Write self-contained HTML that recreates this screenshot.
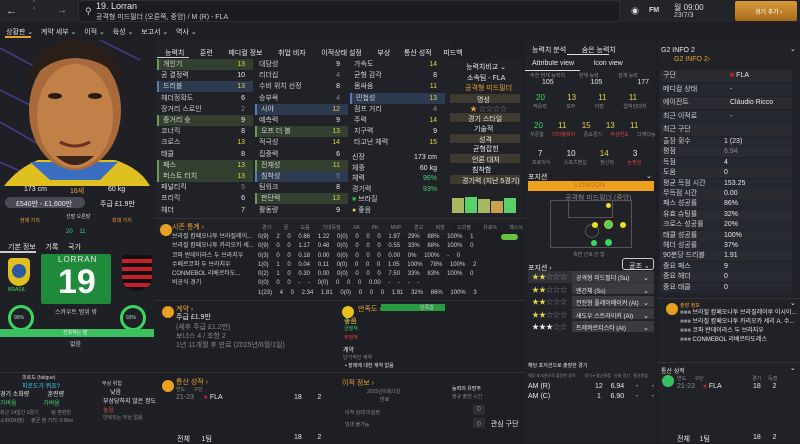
<!DOCTYPE html>
<html><head><meta charset="utf-8"><style>
*{margin:0;padding:0;box-sizing:border-box}
body{width:800px;height:443px;overflow:hidden;background:#1e1f24;font-family:"Liberation Sans","Noto Sans CJK KR",sans-serif;color:#d0d0d0;font-size:7px;position:relative}
.a{position:absolute;white-space:nowrap}
.p{position:absolute;background:#25262b}
.r{position:absolute;height:11px;line-height:11px;font-size:7px;color:#cfcfcf}
.g{background:#33402f;border-left:2px solid #6a9a5a}
.b{background:#2d3b50;border-left:2px solid #5a7ab0}
.y{color:#e3d24a}.w{color:#e8e8e8}.d{color:#888}
.or{color:#e8a030}.gr{color:#3fd36a}.rd{color:#e04545}
.ic{position:absolute;width:12px;height:12px;border-radius:50%;background:#e8a020}
</style></head><body>
<!-- top bar -->
<div class="p" style="left:0;top:0;width:800px;height:22px;background:#232429"></div>
<div class="a" style="left:6px;top:5px;font-size:11px;color:#ccc">&#8592;</div>
<div class="a" style="left:33px;top:1px;font-size:7px;color:#aaa">&#710;<br>&#711;</div>
<div class="a" style="left:57px;top:5px;font-size:10px;color:#aaa">&#8594;</div>
<div class="p" style="left:78px;top:0;width:542px;height:22px;background:#1b1c20;border:1px solid #2e2f35"></div>
<div class="a" style="left:85px;top:6px;font-size:9px;color:#ccc">&#9906;</div>
<div class="a" style="left:96px;top:1px;font-size:9px;color:#e8e8e8">19. Lorran</div>
<div class="a" style="left:96px;top:12px;font-size:7px;color:#ccc">공격형 미드필더 (오른쪽, 중앙) / M (R) - FLA</div>
<div class="a" style="left:631px;top:6px;font-size:8px;color:#ddd">&#9673;</div>
<div class="a" style="left:649px;top:7px;font-size:7px;color:#ddd;font-weight:bold">FM</div>
<div class="a" style="left:674px;top:2px;font-size:8px;color:#ddd">월 09:00</div>
<div class="a" style="left:674px;top:12px;font-size:7px;color:#ccc">23/7/3</div>
<div class="p" style="left:735px;top:1px;width:62px;height:20px;background:linear-gradient(#d99a3a,#a86a1c);border-radius:2px"></div>
<div class="a" style="left:755px;top:7px;font-size:6px;color:#fff">경기 추가 ›</div>
<!-- menu -->
<div class="a" style="left:6px;top:27px;font-size:7px;color:#ddd">상황판 ⌄ &nbsp;&nbsp; 계약 세부 ⌄ &nbsp;&nbsp; 이적 ⌄ &nbsp;&nbsp; 육성 ⌄ &nbsp;&nbsp; 보고서 ⌄ &nbsp;&nbsp; 역사 ⌄</div>
<div class="p" style="left:5px;top:36px;width:26px;height:2px;background:#e8a030"></div>
<!-- left player panel -->
<div class="p" style="left:0;top:40px;width:155px;height:403px;background:#1f2026"></div>
<svg class="a" style="left:0;top:40px" width="155" height="146">
<g stroke="#4a3c8a" stroke-width="1.5"><line x1="0" y1="8" x2="60" y2="40"/><line x1="0" y1="50" x2="40" y2="70"/><line x1="0" y1="82" x2="40" y2="105"/><line x1="0" y1="122" x2="40" y2="140"/><line x1="100" y1="0" x2="140" y2="20"/></g>
<path d="M4 146 Q18 128 38 120 L115 120 Q140 128 150 146 Z" fill="#e0c020"/>
<path d="M30 122 L50 140 L100 140 L118 122Z" fill="#3a6ec0"/>
<ellipse cx="75" cy="70" rx="46" ry="60" fill="#a86a3a"/>
<ellipse cx="75" cy="76" rx="38" ry="52" fill="#c08048"/>
<path d="M26 55 Q28 2 75 0 Q122 2 126 55 Q116 20 75 18 Q36 20 26 55Z" fill="#2a1e18"/>
<ellipse cx="55" cy="56" rx="7" ry="3" fill="#2a1a12"/><ellipse cx="95" cy="56" rx="7" ry="3" fill="#2a1a12"/>
<path d="M60 102 Q75 110 90 102" stroke="#6a3020" stroke-width="3" fill="none"/>
<path d="M56 116 Q75 134 94 116" fill="#3a2418"/>
</svg>
<div class="a w" style="left:24px;top:186px;font-size:7px">173 cm</div>
<div class="a or" style="left:70px;top:186px;font-size:7px">16세</div>
<div class="a w" style="left:108px;top:186px;font-size:7px">60 kg</div>
<div class="p" style="left:5px;top:197px;width:80px;height:11px;background:#4a4b52;border-radius:6px"></div>
<div class="a w" style="left:16px;top:199px">£540만 - £1,600만</div>
<div class="a w" style="left:100px;top:199px">주급 £1.9만</div>
<div class="a or" style="left:20px;top:217px;font-size:5px">현재 가치</div>
<div class="a or" style="left:112px;top:217px;font-size:5px">최대 가치</div>
<div class="a" style="left:66px;top:213px;font-size:5px">선발 오른발</div>
<div class="a gr" style="left:66px;top:229px;font-size:6px">20 &nbsp;&nbsp; 11</div>
<div class="a w" style="left:8px;top:242px">기본 정보 &nbsp;&nbsp;&nbsp; 기록 &nbsp;&nbsp;&nbsp; 국가</div>
<div class="p" style="left:0;top:251px;width:36px;height:2px;background:#ccc"></div>
<div class="a" style="left:8px;top:258px;width:22px;height:28px;border-radius:4px 4px 11px 11px;background:#e0c020"></div>
<div class="a" style="left:12px;top:264px;width:14px;height:14px;border-radius:50%;background:#2a5aa0"></div>
<div class="a gr" style="left:8px;top:287px;font-size:5px">BRASIL</div>
<div class="p" style="left:41px;top:254px;width:70px;height:50px;background:#1f8a3a;border-radius:2px"></div>
<div class="a w" style="left:58px;top:255px;font-size:8px;letter-spacing:1px">LORRAN</div>
<div class="a" style="left:58px;top:262px;font-size:34px;color:#fff;line-height:40px;font-weight:bold">19</div>
<div class="a" style="left:55px;top:307px;font-size:6px">스카우트 범위 밖</div>
<div class="a" style="left:122px;top:255px;width:30px;height:36px;background:repeating-linear-gradient(#111 0 4px,#c8202a 4px 8px);border-radius:3px 3px 14px 14px"></div>
<div class="a" style="left:8px;top:305px;width:26px;height:26px;border-radius:50%;border:3px solid #3ad860"></div>
<div class="a" style="left:14px;top:315px;font-size:5px">96%</div>
<div class="a" style="left:120px;top:305px;width:26px;height:26px;border-radius:50%;border:3px solid #3ad860"></div>
<div class="a" style="left:126px;top:315px;font-size:5px">93%</div>
<div class="p" style="left:0;top:329px;width:154px;height:8px;background:#3cc060"></div>
<div class="a" style="left:63px;top:329px;font-size:5px;color:#eee">선호하는 발</div>
<div class="a" style="left:70px;top:339px;font-size:6px">없음</div>
<div class="p" style="left:0;top:372px;width:154px;height:1px;background:#333"></div>
<div class="a" style="left:22px;top:374px;font-size:5px">피로도 (fatigue)</div>
<div class="a" style="left:22px;top:381px;font-size:6px;color:#3ac8e8">피로도가 뭐죠?</div>
<div class="a w" style="left:0;top:389px;font-size:6px">경기 소화량 &nbsp;&nbsp;&nbsp;&nbsp;&nbsp;&nbsp;&nbsp;&nbsp;&nbsp; 훈련량</div>
<div class="a gr" style="left:0;top:398px;font-size:6px">가벼움 &nbsp;&nbsp;&nbsp;&nbsp;&nbsp;&nbsp;&nbsp;&nbsp;&nbsp;&nbsp;&nbsp;&nbsp;&nbsp;&nbsp; 가벼움</div>
<div class="a d" style="left:0;top:409px;font-size:5px">최근 14일간 0경기 &nbsp;&nbsp;&nbsp;&nbsp;&nbsp;&nbsp;&nbsp; 팀 훈련만</div>
<div class="a d" style="left:0;top:417px;font-size:5px">소화(0/0분) &nbsp;&nbsp;&nbsp; 평균 뛴 거리: 0.0km</div>
<div class="a" style="left:102px;top:380px;font-size:5px">부상 위험</div>
<div class="a w" style="left:110px;top:387px;font-size:6px">낮음</div>
<div class="a w" style="left:103px;top:396px;font-size:6px">부상당하지 않은 정도</div>
<div class="a rd" style="left:103px;top:405px;font-size:6px">높음</div>
<div class="a d" style="left:103px;top:414px;font-size:5px">반복되는 부상 없음</div>
<!-- attribute table -->
<div class="p" style="left:155px;top:40px;width:295px;height:195px;background:#212228"></div>
<div class="a w" style="left:165px;top:48px">능력치 &nbsp;&nbsp;&nbsp;&nbsp;&nbsp;&nbsp; 훈련 &nbsp;&nbsp;&nbsp;&nbsp;&nbsp;&nbsp; 메디컬 정보 &nbsp;&nbsp;&nbsp;&nbsp;&nbsp;&nbsp; 취업 비자 &nbsp;&nbsp;&nbsp;&nbsp;&nbsp;&nbsp; 이적상태 설정 &nbsp;&nbsp;&nbsp;&nbsp;&nbsp;&nbsp; 부상 &nbsp;&nbsp;&nbsp;&nbsp;&nbsp; 통산 성적 &nbsp;&nbsp;&nbsp;&nbsp; 피드백</div>
<div class="p" style="left:157px;top:57px;width:32px;height:1px;background:#ccc"></div>
<div id="t"></div>
<!-- comparison col -->
<div class="p" style="left:448px;top:60px;width:74px;height:163px;background:#212228"></div>
<div class="a w" style="left:466px;top:62px">능력치비교 ⌄</div>
<div class="a w" style="left:467px;top:73px">소속팀 - FLA</div>
<div class="a or" style="left:465px;top:83px">공격형 미드필더</div>
<div class="p" style="left:450px;top:94px;width:70px;height:9px;background:#3e3a30"></div><div class="a w" style="left:477px;top:95px">명성</div>
<div class="a or" style="left:470px;top:104px">★ <span class="d">☆☆☆☆</span></div>
<div class="p" style="left:450px;top:113px;width:70px;height:9px;background:#3e3a30"></div><div class="a w" style="left:468px;top:114px">경기 스타일</div>
<div class="a w" style="left:474px;top:124px">기술적</div>
<div class="p" style="left:450px;top:134px;width:70px;height:9px;background:#3e3a30"></div><div class="a w" style="left:479px;top:135px">성격</div>
<div class="a w" style="left:473px;top:144px">균형잡힌</div>
<div class="p" style="left:450px;top:154px;width:70px;height:9px;background:#3e3a30"></div><div class="a w" style="left:472px;top:155px">언론 대처</div>
<div class="a w" style="left:472px;top:165px">침착함</div>
<div class="p" style="left:450px;top:175px;width:70px;height:9px;background:#3e3a30"></div><div class="a w" style="left:462px;top:176px">경기력 (지난 5경기)</div>
<div class="p" style="left:452px;top:198px;width:12px;height:15px;background:#a8b860"></div>
<div class="p" style="left:465px;top:197px;width:12px;height:16px;background:#5ad068"></div>
<div class="p" style="left:478px;top:199px;width:12px;height:14px;background:#a8b860"></div>
<div class="p" style="left:491px;top:201px;width:12px;height:12px;background:#c8a050"></div>
<div class="p" style="left:504px;top:198px;width:12px;height:15px;background:#5ad068"></div>
<!-- season stats -->
<div class="p" style="left:155px;top:218px;width:370px;height:1px;background:#333"></div>
<div class="ic" style="left:160px;top:224px"></div>
<div class="a or" style="left:172px;top:222px">시즌 통계 ›</div>
<div class="a d" style="left:262px;top:224px;font-size:5px;word-spacing:11px">경기 골 도움 기대득점 XA PK MVP 경고 퇴장 드리블 유효% 패스% 태클 관여 평균평점</div>
<div class="a" style="left:172px;top:233px;line-height:9.3px;font-size:6px">브라질 캄페오나투 브라질레이...<br>브라질 캄페오나투 카리오카 세...<br>코파 반데이라스 두 브라지우<br>수페르코파 두 브라지우<br>CONMEBOL 리베르타도...<br>비공식 경기<br>&nbsp;</div>
<div class="a" style="left:258px;top:233px;line-height:9.3px;font-size:6px;word-spacing:6px">0(9) 2 0 0.66 1.22 0(0) 0 0 0 1.97 29% 88% 100% 1<br>0(9) 0 0 1.17 0.48 0(0) 0 0 0 0.55 33% 88% 100% 0<br>0(3) 0 0 0.18 0.00 0(0) 0 0 0 0.00 0% 100% - 0<br>1(0) 1 0 0.04 0.11 0(0) 0 0 0 1.05 100% 78% 100% 2<br>0(2) 1 0 0.30 0.00 0(0) 0 0 0 7.50 33% 83% 100% 0<br>0(0) 0 0 - - 0(0) 0 0 0 0.00 - - - -<br>1(23) 4 0 2.34 1.81 0(0) 0 0 0 1.91 32% 86% 100% 3</div>
<div class="p" style="left:501px;top:234px;width:17px;height:6px;background:#6ac040;border-radius:3px"></div>
<div class="p" style="left:155px;top:300px;width:370px;height:1px;background:#333"></div>
<div class="ic" style="left:162px;top:306px"></div>
<div class="a or" style="left:176px;top:304px">계약 ›</div>
<div class="a w" style="left:176px;top:312px">주급 £1.9만</div>
<div class="a d" style="left:176px;top:322px">(세후 주급 £1.2만)</div>
<div class="a d" style="left:176px;top:331px">보너스 4 / 조항 2</div>
<div class="a d" style="left:176px;top:340px">1년 11개월 후 만료 (2025년/6월/1일)</div>
<div class="ic" style="left:342px;top:306px;background:#e8c020"></div>
<div class="a or" style="left:358px;top:304px">만족도 ›</div>
<div class="p" style="left:381px;top:304px;width:64px;height:7px;background:#2a9a40"></div>
<div class="a" style="left:420px;top:304px;font-size:5px">만족함</div>
<div class="a y" style="left:344px;top:316px">좋음</div>
<div class="a gr" style="left:344px;top:325px;font-size:5px">긍정적</div>
<div class="a rd" style="left:344px;top:334px;font-size:5px">부정적</div>
<div class="a w" style="left:343px;top:345px;font-size:6px">계약</div>
<div class="a d" style="left:343px;top:354px;font-size:5px">단기적인 계약</div>
<div class="a w" style="left:345px;top:362px;font-size:5px">• 장래에 대한 계약 없음</div>
<div class="p" style="left:155px;top:372px;width:370px;height:1px;background:#333"></div>
<div class="ic" style="left:162px;top:380px"></div>
<div class="a or" style="left:176px;top:377px">통산 성적 ›</div>
<div class="a d" style="left:176px;top:386px;font-size:5px">연도 &nbsp;&nbsp;&nbsp;&nbsp; 구단</div>
<div class="a d" style="left:176px;top:394px">21-23 &nbsp;&nbsp;&nbsp; <span style="color:#c22">●</span> <span class="w">FLA</span></div>
<div class="a w" style="left:294px;top:394px">18 &nbsp;&nbsp;&nbsp;&nbsp;&nbsp;&nbsp; 2</div>
<div class="a w" style="left:177px;top:434px">전체 &nbsp;&nbsp;&nbsp;&nbsp; 1팀</div>
<div class="a w" style="left:294px;top:434px">18 &nbsp;&nbsp;&nbsp;&nbsp;&nbsp;&nbsp; 2</div>
<div class="a or" style="left:342px;top:378px">이적 정보 ›</div>
<div class="a d" style="left:367px;top:388px;font-size:5px">2025년/6월/1일</div>
<div class="a d" style="left:380px;top:396px;font-size:5px">만료</div>
<div class="a w" style="left:452px;top:385px;font-size:5px">능력의 유망주</div>
<div class="a d" style="left:452px;top:393px;font-size:5px">정규 출전 시간</div>
<div class="a d" style="left:345px;top:409px;font-size:5px">이적 상태 미설정</div>
<div class="a d" style="left:345px;top:421px;font-size:5px">임대 불가능</div>
<div class="p" style="left:473px;top:405px;width:12px;height:10px;background:#2e2f35"></div><div class="a d" style="left:477px;top:406px">0</div>
<div class="p" style="left:473px;top:418px;width:12px;height:10px;background:#2e2f35"></div><div class="a d" style="left:477px;top:419px">0 <span class="w" style="margin-left:8px">관심 구단</span></div>
<!-- attribute analysis col -->
<div class="p" style="left:525px;top:40px;width:130px;height:403px;background:#212228"></div>
<div class="a w" style="left:532px;top:45px">능력치 분석 &nbsp;&nbsp;&nbsp;&nbsp;&nbsp;&nbsp; 숨은 능력치</div>
<div class="p" style="left:567px;top:54px;width:42px;height:1px;background:#ddd"></div>
<div class="a w" style="left:532px;top:60px">Attribute view &nbsp;&nbsp;&nbsp;&nbsp;&nbsp;&nbsp;&nbsp;&nbsp; Icon view</div>
<div class="p" style="left:525px;top:70px;width:55px;height:1px;background:#ddd"></div>
<div class="a d" style="left:530px;top:72px;font-size:5px">추천 현재 능력치 &nbsp;&nbsp;&nbsp;&nbsp;&nbsp;&nbsp;&nbsp;&nbsp; 현재 능력 &nbsp;&nbsp;&nbsp;&nbsp;&nbsp;&nbsp;&nbsp;&nbsp;&nbsp;&nbsp;&nbsp;&nbsp; 잠재 능력</div>
<div class="a w" style="left:542px;top:79px">105 &nbsp;&nbsp;&nbsp;&nbsp;&nbsp;&nbsp;&nbsp;&nbsp;&nbsp;&nbsp;&nbsp;&nbsp;&nbsp;&nbsp;&nbsp;&nbsp;&nbsp; 105 &nbsp;&nbsp;&nbsp;&nbsp;&nbsp;&nbsp;&nbsp;&nbsp;&nbsp;&nbsp;&nbsp;&nbsp;&nbsp;&nbsp;&nbsp;&nbsp; 177</div>
<div class="a" style="left:536px;top:93px;font-size:8px;word-spacing:20px"><span class="gr">20</span> <span class="y">13</span> <span class="y">11</span> <span class="y">11</span></div>
<div class="a d" style="left:533px;top:103px;font-size:5px;word-spacing:18px">적응력 포부 야망 압박감대처</div>
<div class="a" style="left:534px;top:121px;font-size:8px;word-spacing:13px"><span class="gr">20</span> <span class="y">11</span> <span class="y">15</span> <span class="y">13</span> <span class="y">11</span></div>
<div class="a" style="left:530px;top:131px;font-size:5px;word-spacing:7px"><span class="d">꾸준함</span> <span class="rd">더티플레이</span> <span class="d">중요경기</span> <span class="rd">부상빈도</span> <span class="d">다재다능</span></div>
<div class="a w" style="left:538px;top:149px;font-size:8px;word-spacing:22px">7 10 <span class="y">14</span> 3</div>
<div class="a d" style="left:532px;top:159px;font-size:5px;word-spacing:12px">프로의식 스포츠맨십 정신력 <span class="rd">논쟁성</span></div>
<div class="a w" style="left:528px;top:172px">포지션</div><div class="a w" style="left:646px;top:172px">⌄</div>
<div class="p" style="left:528px;top:181px;width:126px;height:10px;background:#f0a020"></div>
<div class="a" style="left:575px;top:182px;color:#c07010">LONDON</div>
<div class="a d" style="left:565px;top:193px">공격형 미드필더 (중앙)</div>
<div class="p" style="left:550px;top:200px;width:82px;height:48px;border:1px solid #555;background:transparent"></div>
<div class="p" style="left:568px;top:200px;width:45px;height:18px;border:1px solid #555;border-top:none;background:transparent"></div>
<div class="a" style="left:585px;top:224px;width:14px;height:14px;border-radius:50%;border:1px solid #555"></div>
<div class="a" style="left:606px;top:203px;width:5px;height:5px;border-radius:50%;background:#e8e020"></div>
<div class="a" style="left:592px;top:222px;width:6px;height:6px;border-radius:50%;background:#e8e020"></div>
<div class="a" style="left:604px;top:220px;width:9px;height:9px;border-radius:50%;background:#3ad860;border:1px solid #e8c020"></div>
<div class="a" style="left:620px;top:222px;width:6px;height:6px;border-radius:50%;background:#e8e020"></div>
<div class="a" style="left:591px;top:240px;width:6px;height:6px;border-radius:50%;background:#3ad860"></div>
<div class="a" style="left:605px;top:239px;width:7px;height:7px;border-radius:50%;background:#3ad860"></div>
<div class="a d" style="left:573px;top:251px;font-size:5px">측면 선호 안 함</div>
<div class="a w" style="left:528px;top:263px">포지션 ›</div>
<div class="p" style="left:622px;top:258px;width:32px;height:12px;border:1px solid #ccc;border-radius:3px;background:transparent"></div>
<div class="a w" style="left:629px;top:261px">공조 ⌄</div>
<div class="p" style="left:528px;top:271px;width:126px;height:12px;background:#303137"></div>
<div class="a" style="left:532px;top:272px;line-height:12.5px"><span class="y">★★</span><span class="d">☆☆☆</span><br><span class="y">★★</span><span class="d">☆☆☆</span><br><span class="y">★★</span><span class="d">☆☆☆</span><br><span class="y">★★</span><span class="d">☆☆☆</span><br><span class="w">★★★</span><span class="d">☆☆</span></div>
<div class="p" style="left:572px;top:271px;width:82px;height:11px;background:#3a3b41;border-radius:2px"></div>
<div class="p" style="left:572px;top:283px;width:82px;height:11px;background:#3a3b41;border-radius:2px"></div>
<div class="p" style="left:572px;top:296px;width:82px;height:11px;background:#3a3b41;border-radius:2px"></div>
<div class="p" style="left:572px;top:308px;width:82px;height:11px;background:#3a3b41;border-radius:2px"></div>
<div class="p" style="left:572px;top:321px;width:82px;height:11px;background:#3a3b41;border-radius:2px"></div>
<div class="a w" style="left:576px;top:273px;line-height:12.5px;font-size:6px">공격형 미드필더 (Su)<br>엔간체 (Su)<br>전진형 플레이메이커 (At)<br>섀도우 스트라이커 (At)<br>트레콰르티스타 (At)</div>
<div class="a w" style="left:643px;top:273px;line-height:12.5px">⌄<br>⌄<br>⌄<br>⌄<br>⌄</div>
<div class="a w" style="left:528px;top:362px;font-size:5px">해당 포지션으로 출장한 경기</div>
<div class="a d" style="left:528px;top:373px;font-size:4px">해당 포지션으로 출장한 경기 &nbsp;&nbsp;&nbsp;&nbsp;&nbsp;&nbsp; 경기 ▾ 평균평점 &nbsp; 선발 경기 &nbsp; 평균평점</div>
<div class="a w" style="left:528px;top:382px;line-height:10px">AM (R)<br>AM (C)</div>
<div class="a w" style="left:595px;top:382px;line-height:10px">12 &nbsp;&nbsp; 6.94 &nbsp;&nbsp;&nbsp;&nbsp; - &nbsp;&nbsp;&nbsp;&nbsp;&nbsp; -<br>&nbsp;1 &nbsp;&nbsp;&nbsp; 6.90 &nbsp;&nbsp;&nbsp;&nbsp; - &nbsp;&nbsp;&nbsp;&nbsp;&nbsp; -</div>
<!-- right info col -->
<div class="p" style="left:658px;top:40px;width:142px;height:403px;background:#212228"></div>
<div class="a w" style="left:661px;top:47px">G2 INFO 2</div><div class="a w" style="left:790px;top:45px">⌄</div>
<div class="a or" style="left:674px;top:56px">G2 INFO 2›</div>
<div id="inf"></div>
<div class="p" style="left:658px;top:298px;width:142px;height:1px;background:#333"></div>
<div class="a w" style="left:790px;top:299px">⌄</div>
<div class="ic" style="left:666px;top:303px"></div>
<div class="a or" style="left:680px;top:302px;font-size:5px">출장 정보</div>
<div class="a w" style="left:680px;top:309px;line-height:9px;font-size:6px"><span class="d">■■■</span> 브라질 캄페오나투 브라질레이루 이시이...<br><span class="d">■■■</span> 브라질 캄페오나투 카리오카 세리 A. 수...<br><span class="d">■■■</span> 코파 반데이라스 두 브라지우<br><span class="d">■■■</span> CONMEBOL 리베르타도레스</div>
<div class="p" style="left:658px;top:362px;width:142px;height:1px;background:#333"></div>
<div class="a w" style="left:661px;top:366px;font-size:6px">통산 성적</div><div class="a w" style="left:790px;top:364px">⌄</div>
<div class="ic" style="left:662px;top:375px;background:#3ac060"></div>
<div class="a d" style="left:677px;top:375px;font-size:5px">연도 &nbsp;&nbsp;&nbsp;&nbsp; 구단</div>
<div class="a d" style="left:752px;top:375px;font-size:5px">경기 &nbsp;&nbsp;&nbsp; 득점</div>
<div class="a d" style="left:677px;top:383px">21-23 &nbsp;&nbsp; <span style="color:#c22">●</span> <span class="w">FLA</span></div>
<div class="a w" style="left:753px;top:383px">18 &nbsp;&nbsp;&nbsp;&nbsp; 2</div>
<div class="a w" style="left:677px;top:434px">전체 &nbsp;&nbsp;&nbsp; 1팀</div>
<div class="a w" style="left:753px;top:434px">18 &nbsp;&nbsp;&nbsp;&nbsp; 2</div>
<script>
var c1=[["개인기",13,"g"],["공 결정력",10],["드리블",13,"b"],["헤더정확도",6],["장거리 스로인",2],["중거리 슛",9,"g"],["코너킥",8],["크로스",13],["태클",8],["패스",13,"g"],["퍼스트 터치",13,"g"],["페널티킥",5],["프리킥",6],["헤더",7]];
var c2=[["대담성",9],["리더십",4],["수비 위치 선정",8],["승부욕",4],["시야",12,"b"],["예측력",9],["오프 더 볼",13,"g"],["적극성",14],["집중력",6],["전재성",11,"g"],["침착성",5,"b"],["팀워크",8],["판단력",13,"g"],["활동량",9]];
var c3=[["가속도",14],["균형 감각",8],["몸싸움",11],["민첩성",13,"b"],["점프 거리",4],["주력",14],["지구력",9],["타고난 체력",15]];
function col(a,x,w){var h="";a.forEach(function(r,i){var v=r[1],cl=v>=11?"y":(v<=5?"d":"w");h+='<div class="r '+(r[2]||"")+'" style="left:'+x+'px;top:'+(59+i*11.2)+'px;width:'+w+'px;padding-left:4px">'+r[0]+'<span class="'+cl+'" style="position:absolute;right:8px">'+v+'</span></div>';});return h;}
var h=col(c1,157,96)+col(c2,255,93)+col(c3,350,95);
var ex=[["신장","173 cm","w"],["체중","60 kg","w"],["체력","96%","gr"],["경기력","93%","gr"],["<span style=\"color:#3a3\">■</span> 브라질",""],["<span class=\"y\">●</span> 좋음",""]];
ex.forEach(function(r,i){h+='<div class="r" style="left:350px;top:'+(152+i*10.5)+'px;width:95px;padding-left:2px">'+r[0]+'<span class="'+(r[2]||"")+'" style="position:absolute;right:8px">'+r[1]+'</span></div>';});
document.getElementById("t").innerHTML=h;
var inf=[["구단","<span style='color:#c22'>■</span> FLA"],["메디컬 상태","-"],["에이전트","Cláudio Ricco"],["최근 이적료","-"],["최근 구단",""],["출장 횟수","1 (23)"],["평점","<span class='d'>6.94</span>"],["득점","4"],["도움","0"],["평균 득점 시간","153.25"],["무득점 시간","0.00"],["패스 성공률","86%"],["유효 슈팅률","32%"],["크로스 성공률","20%"],["태클 성공률","100%"],["헤더 성공률","37%"],["90분당 드리블","1.91"],["중요 패스","9"],["중요 헤더","0"],["중요 태클","0"]];
var s="";inf.forEach(function(r,i){var y=i<5?70+i*13.5:137+(i-5)*10.4;s+='<div class="r" style="left:660px;top:'+y+'px;width:132px;height:'+(i<5?12:10)+'px;line-height:'+(i<5?12:10)+'px;background:'+(i%2?"#262830":"#2a2b31")+';padding-left:3px">'+r[0]+'<span class="w" style="position:absolute;left:'+(i<5?70:64)+'px">'+r[1]+'</span></div>';});
document.getElementById("inf").innerHTML=s;
</script>
</body></html>
